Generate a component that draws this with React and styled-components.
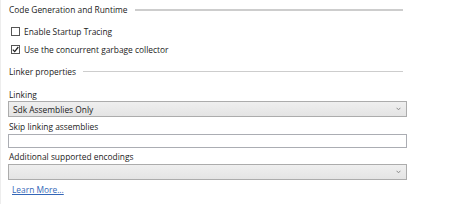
import React from "react";
import styled, { createGlobalStyle } from "styled-components";

const Global = createGlobalStyle`
  html, body { margin: 0; padding: 0; background: #fff; }
  body { font-family: "Open Sans", "Noto Sans", sans-serif; color: #1b1b1b; }
`;

const Page = styled.div`
  width: 474px;
  height: 204px;
  box-sizing: border-box;
  border-left: 1px solid #ededed;
  padding: 3px 0 0 7px;
  display: flex;
  flex-direction: column;
  font-size: 8.4px;
`;

const Content = styled.div`
  width: 399px;
  display: flex;
  flex-direction: column;
`;

const SectionHeader = styled.div`
  display: flex;
  align-items: center;
  gap: 7px;
  height: 13px;
  line-height: 13px;
  padding-left: 1px;
  margin-top: ${(p) => p.$top || 0}px;
  white-space: nowrap;
  &::after {
    content: "";
    flex: 1;
    height: ${(p) => p.$thick || 1}px;
    background: #cdcdcd;
    margin-right: 4px;
  }
`;

const CheckRow = styled.label`
  display: flex;
  align-items: center;
  gap: 3px;
  height: 18px;
  padding-left: 3px;
  margin-top: ${(p) => p.$top || 0}px;
`;

const Box = styled.span`
  width: 7px;
  height: 7px;
  border: 1px solid #555;
  background: #fff;
  display: inline-flex;
  align-items: center;
  justify-content: center;
  box-sizing: content-box;
  margin-right: 1px;
`;

const FieldLabel = styled.div`
  height: 13px;
  line-height: 13px;
  padding-left: 1px;
  margin-top: ${(p) => p.$top || 0}px;
  margin-bottom: ${(p) => p.$bottom || 0}px;
`;

const Select = styled.div`
  height: 14px;
  box-sizing: content-box;
  border: 1px solid #acacac;
  background: linear-gradient(#efefef, #e4e4e4);
  display: flex;
  align-items: center;
  justify-content: space-between;
  padding: 0 5px 0 4px;
`;

const Input = styled.div`
  height: 12px;
  box-sizing: content-box;
  border: 1px solid #abadb3;
  background: #fff;
`;

const Link = styled.a`
  color: #3467b8;
  text-decoration: underline;
  margin: 3px 0 0 4px;
  line-height: 13px;
  width: max-content;
`;

const Chevron = () => (
  <svg width="5" height="4" viewBox="0 0 5 4">
    <path d="M0.6 0.8 L2.5 2.8 L4.4 0.8" fill="none" stroke="#8a8a8a" strokeWidth="1" />
  </svg>
);

const Check = () => (
  <svg width="7" height="7" viewBox="0 0 7 7">
    <path d="M0.8 3.6 L2.7 5.6 L6.3 1" fill="none" stroke="#222" strokeWidth="1.3" />
  </svg>
);

export default function App() {
  return (
    <>
      <Global />
      <Page>
        <Content>
          <SectionHeader $thick={2}>Code Generation and Runtime</SectionHeader>
          <CheckRow $top={6}>
            <Box />
            Enable Startup Tracing
          </CheckRow>
          <CheckRow>
            <Box>
              <Check />
            </Box>
            Use the concurrent garbage collector
          </CheckRow>
          <SectionHeader $top={7}>Linker properties</SectionHeader>
          <FieldLabel $top={10}>Linking</FieldLabel>
          <Select>
            Sdk Assemblies Only
            <Chevron />
          </Select>
          <FieldLabel $top={3} $bottom={1}>Skip linking assemblies</FieldLabel>
          <Input />
          <FieldLabel $top={2} $bottom={1}>Additional supported encodings</FieldLabel>
          <Select>
            <span />
            <Chevron />
          </Select>
          <Link href="#">Learn More...</Link>
        </Content>
      </Page>
    </>
  );
}
